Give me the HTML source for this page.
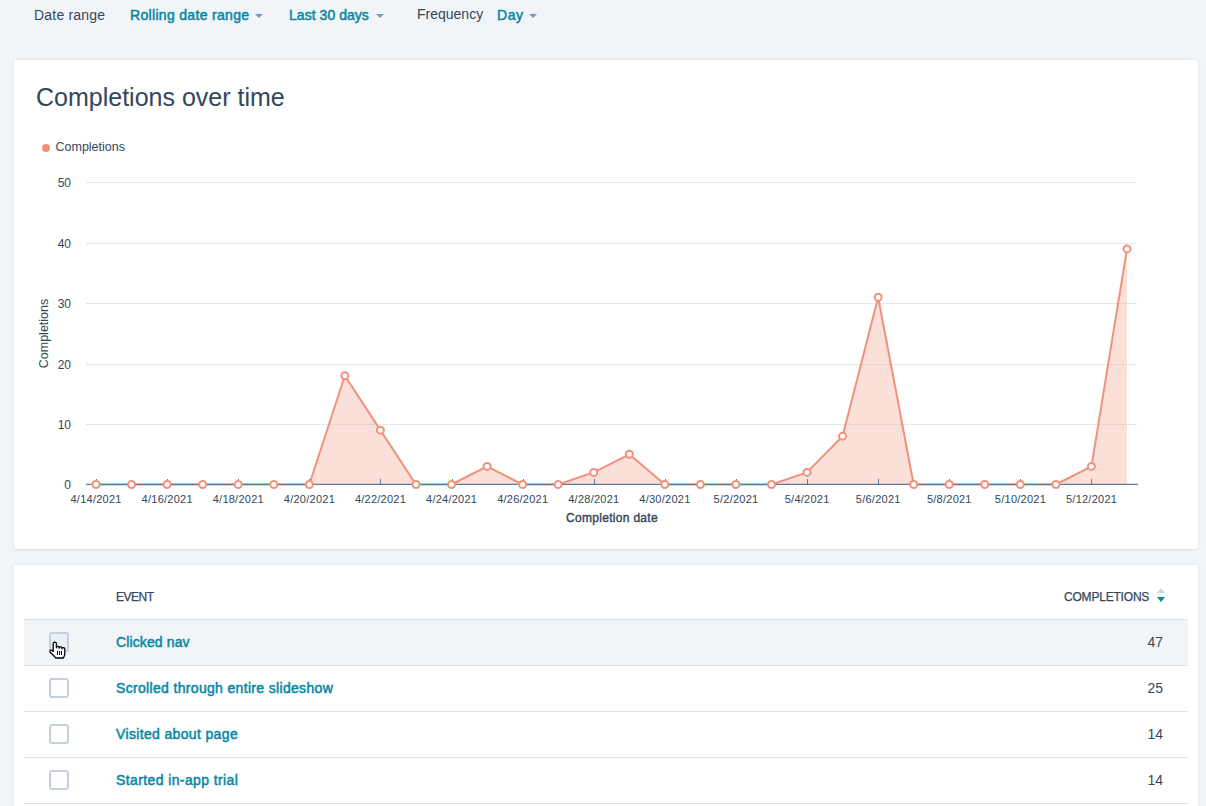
<!DOCTYPE html>
<html><head><meta charset="utf-8">
<style>
html,body{margin:0;padding:0}
body{width:1206px;height:806px;overflow:hidden;background:#f2f5f8;position:relative;font-family:"Liberation Sans",sans-serif;color:#33475b}
.flt{position:absolute;top:7px;font-size:14px;line-height:16px;white-space:nowrap}
.lnk{color:#0787a3;-webkit-text-stroke:0.5px #0787a3}
.caret{position:absolute;width:0;height:0;border-left:4px solid transparent;border-right:4px solid transparent;border-top:4px solid #7c98b6}
.card{position:absolute;left:14px;width:1184px;background:#fff;border-radius:2px;box-shadow:0 0 4px rgba(45,62,80,0.09),0 1px 2px rgba(45,62,80,0.06)}
.title{position:absolute;left:36px;top:83px;font-size:25px;line-height:29px;white-space:nowrap}
svg{position:absolute;left:0;top:0}
.yl{font-size:12px;fill:#33475b}
.xl{font-size:11px;fill:#33475b;letter-spacing:0.25px}
.xt{font-size:12px;fill:#33475b;stroke:#33475b;stroke-width:0.4px;letter-spacing:0.3px}
.yt{font-size:12.5px;fill:#33475b}
.lg{font-size:12.5px;fill:#33475b}
.th{position:absolute;top:590px;font-size:12px;line-height:14px;white-space:nowrap;-webkit-text-stroke:0.25px #33475b}
.hline{position:absolute;left:24px;width:1164px;height:1px;background:#dfe3e8}
.row{position:absolute;left:24px;width:1164px;height:45px;border-bottom:1px solid #dfe3e8}
.row.hov{background:#f2f5f8}
.cb{position:absolute;left:25px;top:12px;width:16px;height:16px;border:2px solid #c5d1de;border-radius:3px;background:#fff}
.hov .cb{background:#eaf0f6;top:12px}
.nm{position:absolute;left:92px;top:14px;font-size:14px;line-height:16px;-webkit-text-stroke:0.5px #0787a3;color:#0787a3;white-space:nowrap;letter-spacing:-0.3px}
.num{position:absolute;right:25px;top:14px;font-size:14px;line-height:16px;white-space:nowrap}
.sort{position:absolute;left:1156.5px;width:0;height:0;border-left:4px solid transparent;border-right:4px solid transparent}
.hand{position:absolute}
</style></head><body>
<div class="flt" style="left:34px;letter-spacing:0.2px">Date range</div>
<div class="flt lnk" style="left:130px;letter-spacing:0.32px">Rolling date range</div>
<div class="caret" style="left:255px;top:14px"></div>
<div class="flt lnk" style="left:289px;letter-spacing:0.04px">Last 30 days</div>
<div class="caret" style="left:376px;top:14px"></div>
<div class="flt" style="left:417px;top:6px">Frequency</div>
<div class="flt lnk" style="left:497px;letter-spacing:0.6px">Day</div>
<div class="caret" style="left:529px;top:14px"></div>

<div class="card" style="top:60px;height:489px"></div>
<div class="card" style="top:565px;height:260px"></div>
<div class="title">Completions over time</div>
<svg width="1206" height="560" viewBox="0 0 1206 560">
<line x1="86" y1="182.5" x2="1137" y2="182.5" stroke="#dde3e8" stroke-width="1" stroke-dasharray="3,1"/>
<line x1="86" y1="243.5" x2="1137" y2="243.5" stroke="#dde3e8" stroke-width="1" stroke-dasharray="3,1"/>
<line x1="86" y1="303.5" x2="1137" y2="303.5" stroke="#dde3e8" stroke-width="1" stroke-dasharray="3,1"/>
<line x1="86" y1="364.5" x2="1137" y2="364.5" stroke="#dde3e8" stroke-width="1" stroke-dasharray="3,1"/>
<line x1="86" y1="424.5" x2="1137" y2="424.5" stroke="#dde3e8" stroke-width="1" stroke-dasharray="3,1"/>
<path d="M96.00,484.5 L96.00,484.50 L131.55,484.50 L167.10,484.50 L202.66,484.50 L238.21,484.50 L273.76,484.50 L309.31,484.50 L344.86,375.78 L380.41,430.14 L415.97,484.50 L451.52,484.50 L487.07,466.38 L522.62,484.50 L558.17,484.50 L593.72,472.42 L629.28,454.30 L664.83,484.50 L700.38,484.50 L735.93,484.50 L771.48,484.50 L807.03,472.42 L842.59,436.18 L878.14,297.26 L913.69,484.50 L949.24,484.50 L984.79,484.50 L1020.34,484.50 L1055.90,484.50 L1091.45,466.38 L1127.00,248.94 L1127.00,484.5 Z" fill="#f2917b" fill-opacity="0.28"/>
<path d="M96.00,484.50 L131.55,484.50 L167.10,484.50 L202.66,484.50 L238.21,484.50 L273.76,484.50 L309.31,484.50 L344.86,375.78 L380.41,430.14 L415.97,484.50 L451.52,484.50 L487.07,466.38 L522.62,484.50 L558.17,484.50 L593.72,472.42 L629.28,454.30 L664.83,484.50 L700.38,484.50 L735.93,484.50 L771.48,484.50 L807.03,472.42 L842.59,436.18 L878.14,297.26 L913.69,484.50 L949.24,484.50 L984.79,484.50 L1020.34,484.50 L1055.90,484.50 L1091.45,466.38 L1127.00,248.94" fill="none" stroke="#f2917b" stroke-width="2" stroke-linejoin="round"/>
<line x1="86" y1="484.4" x2="1138" y2="484.4" stroke="#62799a" stroke-width="1.3"/>
<line x1="96.5" y1="479" x2="96.5" y2="484" stroke="#62799a" stroke-width="1"/>
<line x1="167.5" y1="479" x2="167.5" y2="484" stroke="#62799a" stroke-width="1"/>
<line x1="238.5" y1="479" x2="238.5" y2="484" stroke="#62799a" stroke-width="1"/>
<line x1="309.5" y1="479" x2="309.5" y2="484" stroke="#62799a" stroke-width="1"/>
<line x1="380.5" y1="479" x2="380.5" y2="484" stroke="#62799a" stroke-width="1"/>
<line x1="452.5" y1="479" x2="452.5" y2="484" stroke="#62799a" stroke-width="1"/>
<line x1="523.5" y1="479" x2="523.5" y2="484" stroke="#62799a" stroke-width="1"/>
<line x1="594.5" y1="479" x2="594.5" y2="484" stroke="#62799a" stroke-width="1"/>
<line x1="665.5" y1="479" x2="665.5" y2="484" stroke="#62799a" stroke-width="1"/>
<line x1="736.5" y1="479" x2="736.5" y2="484" stroke="#62799a" stroke-width="1"/>
<line x1="807.5" y1="479" x2="807.5" y2="484" stroke="#62799a" stroke-width="1"/>
<line x1="878.5" y1="479" x2="878.5" y2="484" stroke="#62799a" stroke-width="1"/>
<line x1="949.5" y1="479" x2="949.5" y2="484" stroke="#62799a" stroke-width="1"/>
<line x1="1020.5" y1="479" x2="1020.5" y2="484" stroke="#62799a" stroke-width="1"/>
<line x1="1091.5" y1="479" x2="1091.5" y2="484" stroke="#62799a" stroke-width="1"/>
<circle cx="96.00" cy="484.50" r="3.5" fill="#fff" stroke="#f2917b" stroke-width="2"/>
<circle cx="131.55" cy="484.50" r="3.5" fill="#fff" stroke="#f2917b" stroke-width="2"/>
<circle cx="167.10" cy="484.50" r="3.5" fill="#fff" stroke="#f2917b" stroke-width="2"/>
<circle cx="202.66" cy="484.50" r="3.5" fill="#fff" stroke="#f2917b" stroke-width="2"/>
<circle cx="238.21" cy="484.50" r="3.5" fill="#fff" stroke="#f2917b" stroke-width="2"/>
<circle cx="273.76" cy="484.50" r="3.5" fill="#fff" stroke="#f2917b" stroke-width="2"/>
<circle cx="309.31" cy="484.50" r="3.5" fill="#fff" stroke="#f2917b" stroke-width="2"/>
<circle cx="344.86" cy="375.78" r="3.5" fill="#fff" stroke="#f2917b" stroke-width="2"/>
<circle cx="380.41" cy="430.14" r="3.5" fill="#fff" stroke="#f2917b" stroke-width="2"/>
<circle cx="415.97" cy="484.50" r="3.5" fill="#fff" stroke="#f2917b" stroke-width="2"/>
<circle cx="451.52" cy="484.50" r="3.5" fill="#fff" stroke="#f2917b" stroke-width="2"/>
<circle cx="487.07" cy="466.38" r="3.5" fill="#fff" stroke="#f2917b" stroke-width="2"/>
<circle cx="522.62" cy="484.50" r="3.5" fill="#fff" stroke="#f2917b" stroke-width="2"/>
<circle cx="558.17" cy="484.50" r="3.5" fill="#fff" stroke="#f2917b" stroke-width="2"/>
<circle cx="593.72" cy="472.42" r="3.5" fill="#fff" stroke="#f2917b" stroke-width="2"/>
<circle cx="629.28" cy="454.30" r="3.5" fill="#fff" stroke="#f2917b" stroke-width="2"/>
<circle cx="664.83" cy="484.50" r="3.5" fill="#fff" stroke="#f2917b" stroke-width="2"/>
<circle cx="700.38" cy="484.50" r="3.5" fill="#fff" stroke="#f2917b" stroke-width="2"/>
<circle cx="735.93" cy="484.50" r="3.5" fill="#fff" stroke="#f2917b" stroke-width="2"/>
<circle cx="771.48" cy="484.50" r="3.5" fill="#fff" stroke="#f2917b" stroke-width="2"/>
<circle cx="807.03" cy="472.42" r="3.5" fill="#fff" stroke="#f2917b" stroke-width="2"/>
<circle cx="842.59" cy="436.18" r="3.5" fill="#fff" stroke="#f2917b" stroke-width="2"/>
<circle cx="878.14" cy="297.26" r="3.5" fill="#fff" stroke="#f2917b" stroke-width="2"/>
<circle cx="913.69" cy="484.50" r="3.5" fill="#fff" stroke="#f2917b" stroke-width="2"/>
<circle cx="949.24" cy="484.50" r="3.5" fill="#fff" stroke="#f2917b" stroke-width="2"/>
<circle cx="984.79" cy="484.50" r="3.5" fill="#fff" stroke="#f2917b" stroke-width="2"/>
<circle cx="1020.34" cy="484.50" r="3.5" fill="#fff" stroke="#f2917b" stroke-width="2"/>
<circle cx="1055.90" cy="484.50" r="3.5" fill="#fff" stroke="#f2917b" stroke-width="2"/>
<circle cx="1091.45" cy="466.38" r="3.5" fill="#fff" stroke="#f2917b" stroke-width="2"/>
<circle cx="1127.00" cy="248.94" r="3.5" fill="#fff" stroke="#f2917b" stroke-width="2"/>
<text x="71" y="187" text-anchor="end" class="yl">50</text>
<text x="71" y="248" text-anchor="end" class="yl">40</text>
<text x="71" y="308" text-anchor="end" class="yl">30</text>
<text x="71" y="369" text-anchor="end" class="yl">20</text>
<text x="71" y="429" text-anchor="end" class="yl">10</text>
<text x="71" y="489" text-anchor="end" class="yl">0</text>
<text x="96.10" y="503" text-anchor="middle" class="xl">4/14/2021</text>
<text x="167.20" y="503" text-anchor="middle" class="xl">4/16/2021</text>
<text x="238.31" y="503" text-anchor="middle" class="xl">4/18/2021</text>
<text x="309.41" y="503" text-anchor="middle" class="xl">4/20/2021</text>
<text x="380.51" y="503" text-anchor="middle" class="xl">4/22/2021</text>
<text x="451.62" y="503" text-anchor="middle" class="xl">4/24/2021</text>
<text x="522.72" y="503" text-anchor="middle" class="xl">4/26/2021</text>
<text x="593.82" y="503" text-anchor="middle" class="xl">4/28/2021</text>
<text x="664.93" y="503" text-anchor="middle" class="xl">4/30/2021</text>
<text x="736.03" y="503" text-anchor="middle" class="xl">5/2/2021</text>
<text x="807.13" y="503" text-anchor="middle" class="xl">5/4/2021</text>
<text x="878.24" y="503" text-anchor="middle" class="xl">5/6/2021</text>
<text x="949.34" y="503" text-anchor="middle" class="xl">5/8/2021</text>
<text x="1020.44" y="503" text-anchor="middle" class="xl">5/10/2021</text>
<text x="1091.55" y="503" text-anchor="middle" class="xl">5/12/2021</text>
<text x="612" y="522" text-anchor="middle" class="xt">Completion date</text>
<text transform="translate(47.5,333.5) rotate(-90)" text-anchor="middle" class="yt">Completions</text>
<circle cx="46" cy="148" r="4" fill="#f2917b"/>
<text x="55.5" y="151" class="lg">Completions</text>
</svg>
<div class="th" style="left:116px;letter-spacing:-0.5px">EVENT</div>
<div class="th" style="left:1064px;letter-spacing:-0.2px">COMPLETIONS</div>
<div class="sort" style="top:588px;border-bottom:5px solid #cbd6e2"></div>
<div class="sort" style="top:597px;border-top:5px solid #0787a3"></div>
<div class="hline" style="top:619px"></div>
<div class="row hov" style="top:620px"><div class="cb"></div><div class="nm" style="letter-spacing:0.12px">Clicked nav</div><div class="num">47</div></div>
<div class="row" style="top:666px"><div class="cb"></div><div class="nm" style="letter-spacing:0.33px">Scrolled through entire slideshow</div><div class="num">25</div></div>
<div class="row" style="top:712px"><div class="cb"></div><div class="nm" style="letter-spacing:0.35px">Visited about page</div><div class="num">14</div></div>
<div class="row" style="top:758px"><div class="cb"></div><div class="nm" style="letter-spacing:0.39px">Started in-app trial</div><div class="num">14</div></div>
<svg class="hand" width="20" height="20" viewBox="0 0 20 20" style="left:48px;top:640px">
<path d="M5.2,3.7 C5.2,1.5 8.4,1.5 8.4,3.7 L8.4,7.8 C8.4,5.9 11.2,5.9 11.2,7.8 L11.2,8.2 C11.2,6.4 14,6.4 14,8.2 L14,8.8 C14,7.2 16.8,7.2 16.8,9 L16.8,13.5 C16.8,15.2 16,16.5 15.4,18 L7.6,18 C6.6,16.4 4.4,14.4 2.4,12.6 C1.2,11.4 2.2,9.6 3.9,10.4 L5.2,11.4 Z" fill="#fff" stroke="#000" stroke-width="1.3" stroke-linejoin="round"/>
<path d="M9.5,10.9 V15 M11.6,10.9 V15 M13.5,10.9 V15" stroke="#000" stroke-width="1"/>
</svg>
</body></html>
